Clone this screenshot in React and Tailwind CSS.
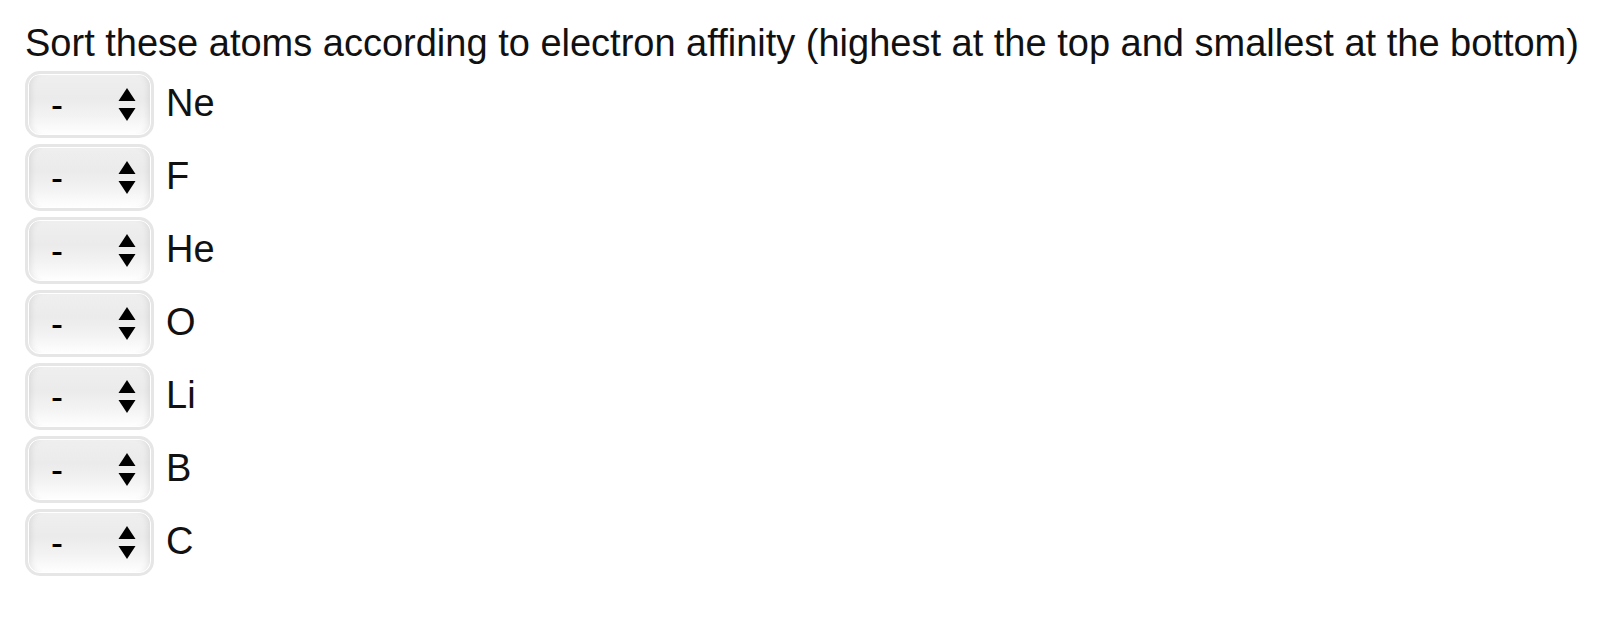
const ATOMS = ['Ne', 'F', 'He', 'O', 'Li', 'B', 'C']

function Arrows() {
  return (
    <svg width="18" height="34" viewBox="0 0 18 34" className="pointer-events-none absolute left-[93px] top-[17px]">
      <polygon points="9,0 17.5,13 0.5,13" fill="#000" />
      <polygon points="0.5,20 17.5,20 9,33" fill="#000" />
    </svg>
  )
}

function AtomSelect() {
  return (
    <div className="relative">
      <select
        defaultValue="-"
        className="appearance-none w-[129px] h-[67px] rounded-[15px] border-[3px] border-[#e6e6e6] pl-[23px] text-[36px] text-black outline-none
                   bg-[linear-gradient(to_bottom,#efefef_0%,#ebebeb_40%,#eeeeee_52%,#f3f3f3_70%,#fbfbfb_90%,#ffffff_100%)]
                   shadow-[inset_0_0_0_1px_#ffffff,inset_7px_0_7px_-5px_rgba(0,0,0,0.10),inset_-7px_0_7px_-5px_rgba(0,0,0,0.10)]"
      >
        <option value="-">-</option>
        {ATOMS.map((_, i) => (
          <option key={i} value={i + 1}>{i + 1}</option>
        ))}
      </select>
      <Arrows />
    </div>
  )
}

export default function App() {
  return (
    <div className="bg-white min-h-[620px] pl-[25px] pt-[20px] text-black font-['Liberation_Sans',Arial,sans-serif]">
      <p className="text-[38px] leading-[46px] whitespace-nowrap text-[#111]">
        Sort these atoms according to electron affinity (highest at the top and smallest at the bottom)
      </p>
      <div className="mt-[5px] flex flex-col gap-[6px]">
        {ATOMS.map((a) => (
          <div key={a} className="flex items-center gap-[12px]">
            <AtomSelect />
            <span className="text-[38px] leading-none text-[#111] -translate-y-[2px]">{a}</span>
          </div>
        ))}
      </div>
    </div>
  )
}
